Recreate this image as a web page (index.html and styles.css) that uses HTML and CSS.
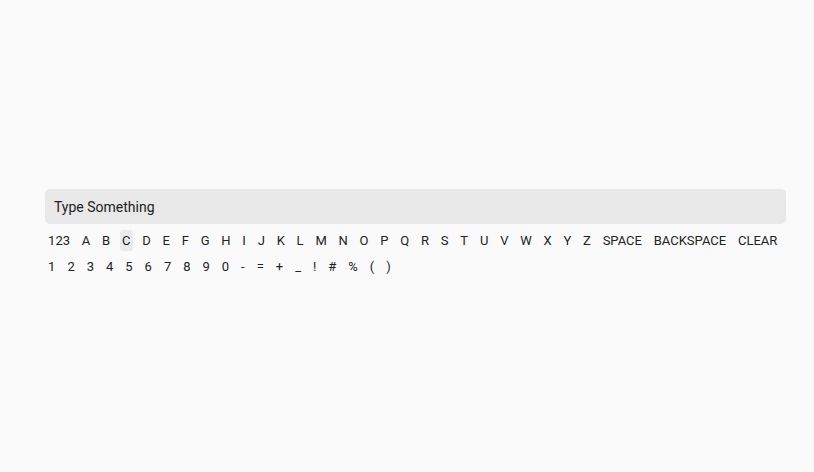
FILE: index.html
```html
<!DOCTYPE html>
<html>
<head>
<meta charset="utf-8">
<link rel="stylesheet" href="styles.css">
</head>
<body>
<div class="wrap">
  <div class="field">Type Something</div>
  <div class="row">
    <span class="key">123</span>
    <span class="key">A</span><span class="key">B</span><span class="key active">C</span><span class="key">D</span><span class="key">E</span><span class="key">F</span><span class="key">G</span><span class="key">H</span><span class="key">I</span><span class="key">J</span><span class="key">K</span><span class="key">L</span><span class="key">M</span><span class="key">N</span><span class="key">O</span><span class="key">P</span><span class="key">Q</span><span class="key">R</span><span class="key">S</span><span class="key">T</span><span class="key">U</span><span class="key">V</span><span class="key">W</span><span class="key">X</span><span class="key">Y</span><span class="key">Z</span>
    <span class="key">SPACE</span><span class="key">BACKSPACE</span><span class="key">CLEAR</span>
  </div>
  <div class="row symbols">
    <span class="key">1</span><span class="key">2</span><span class="key">3</span><span class="key">4</span><span class="key">5</span><span class="key">6</span><span class="key">7</span><span class="key">8</span><span class="key">9</span><span class="key">0</span><span class="key">-</span><span class="key">=</span><span class="key">+</span><span class="key">_</span><span class="key">!</span><span class="key">#</span><span class="key">%</span><span class="key">(</span><span class="key">)</span>
  </div>
</div>
</body>
</html>
```
FILE: styles.css
```css
html, body {
  margin: 0;
  padding: 0;
  background: #fafafa;
}
body {
  font-family: Roboto, "Liberation Sans", sans-serif;
  color: #222;
}
.wrap {
  width: 741px;
  margin-left: 45px;
  padding-top: 189px;
}
.field {
  height: 35px;
  box-sizing: border-box;
  background: #e8e8e8;
  border-radius: 5px;
  padding: 1px 0 0 9px;
  font-size: 14px;
  line-height: 35px;
  color: #222;
}
.row {
  display: flex;
  gap: 7.6px;
  margin-top: 6px;
  padding-left: 1px;
  font-size: 13px;
}
.row.symbols {
  gap: 7.8px;
  margin-top: 5px;
}
.key {
  height: 21px;
  line-height: 21px;
  padding: 0 2.1px;
  border-radius: 3px;
}
.key.active {
  background: #ebebeb;
}
```
